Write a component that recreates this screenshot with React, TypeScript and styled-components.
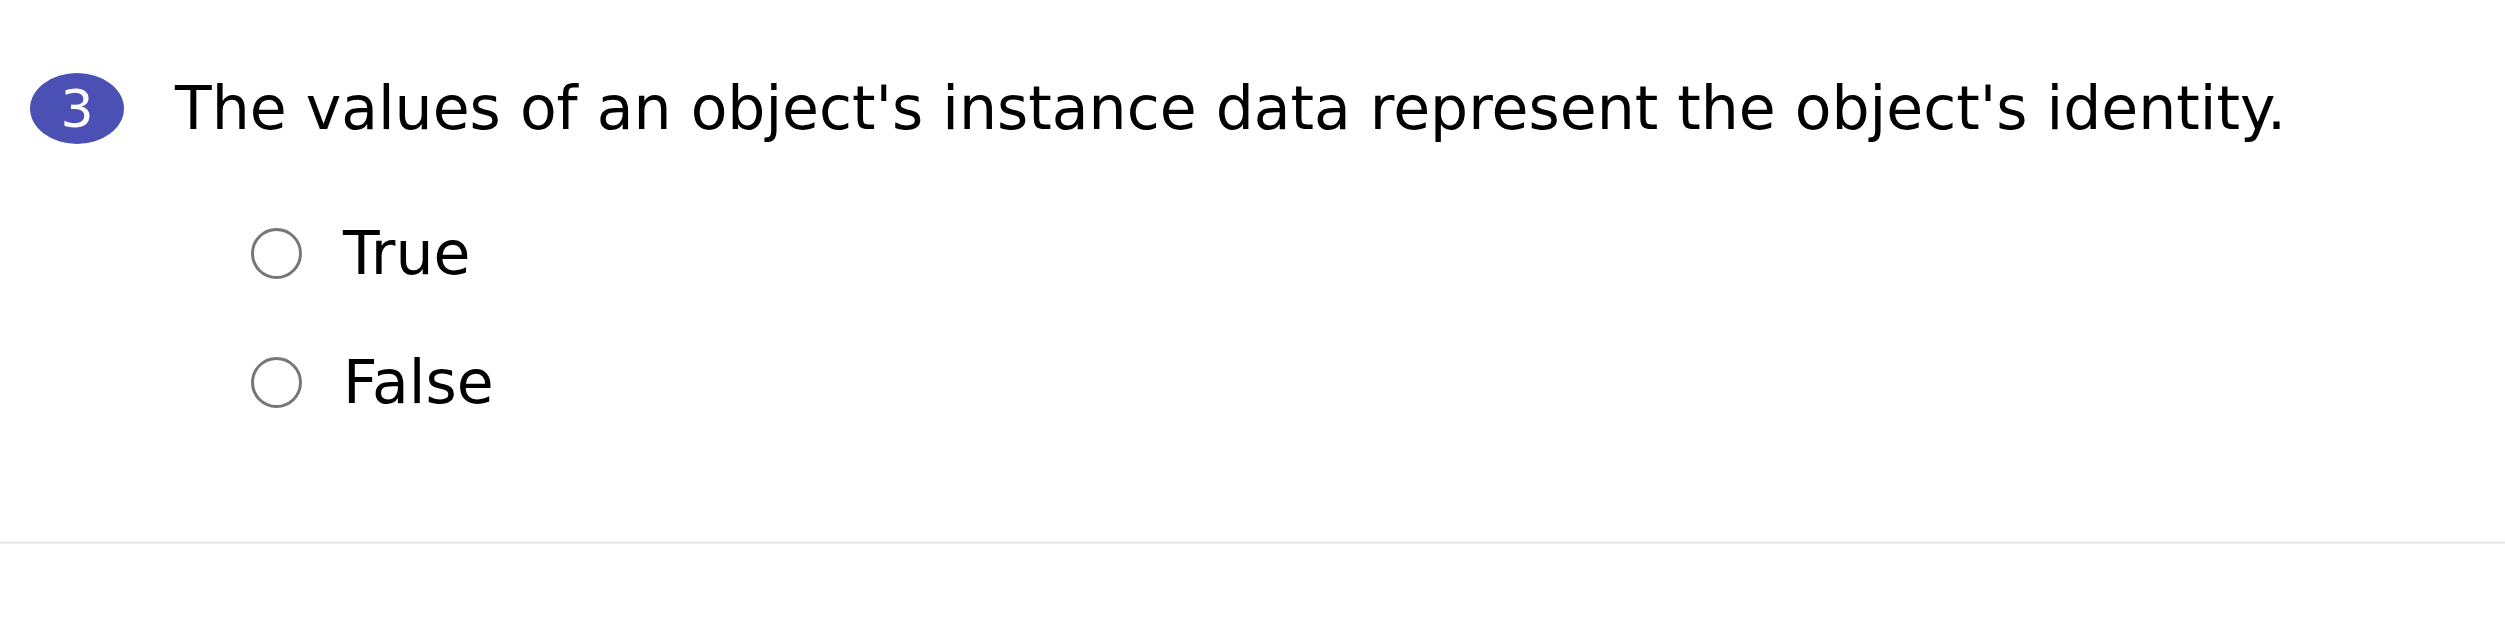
import React from 'react';
import styled, { createGlobalStyle } from 'styled-components';

const GlobalStyle = createGlobalStyle`
  body {
    margin: 0;
    background: #fff;
    font-family: "DejaVu Sans", Verdana, sans-serif;
    color: #000;
  }
`;

const Card = styled.div`
  width: 2505px;
  height: 544px;
  box-sizing: border-box;
  padding-top: 73px;
  border-bottom: 3px solid #ececec;
`;

const QuestionRow = styled.div`
  display: flex;
  align-items: center;
  padding-left: 30px;
  gap: 51px;
`;

const Badge = styled.span`
  display: flex;
  align-items: center;
  justify-content: center;
  width: 94px;
  height: 71px;
  border-radius: 50%;
  background: #4a50b4;
  color: #fff;
  font-size: 52px;
`;

const QuestionText = styled.p`
  margin: 0;
  font-size: 60px;
  line-height: 71px;
`;

const Options = styled.div`
  display: flex;
  flex-direction: column;
  gap: 78px;
  padding-left: 251px;
  margin-top: 84px;
`;

const Option = styled.label`
  display: flex;
  align-items: center;
  gap: 41px;
  font-size: 60px;
  line-height: 51px;
`;

const Radio = styled.span`
  width: 51px;
  height: 51px;
  box-sizing: border-box;
  border: 3px solid #777;
  border-radius: 50%;
  background: #fff;
`;

const answers = ['True', 'False'];

const App: React.FC = () => {
  return (
    <>
      <GlobalStyle />
      <Card>
        <QuestionRow>
          <Badge>3</Badge>
          <QuestionText>
            The values of an object's instance data represent the object's identity.
          </QuestionText>
        </QuestionRow>
        <Options>
          {answers.map((a) => (
            <Option key={a}>
              <Radio />
              {a}
            </Option>
          ))}
        </Options>
      </Card>
    </>
  );
};

export default App;
